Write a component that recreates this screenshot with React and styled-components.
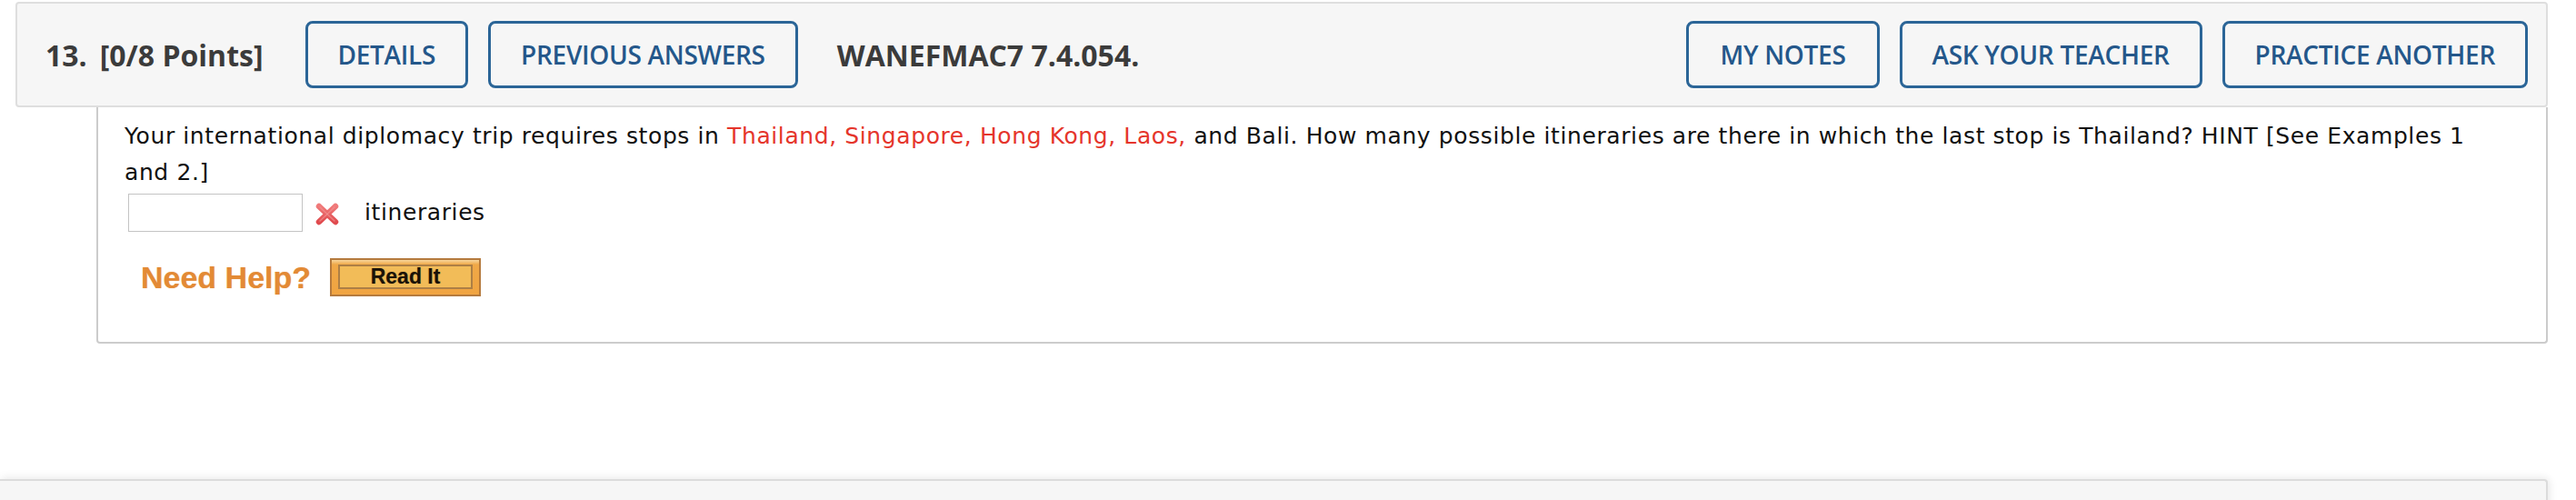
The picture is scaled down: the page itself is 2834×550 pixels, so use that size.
import React from "react";
import styled, { createGlobalStyle } from "styled-components";

const Global = createGlobalStyle`
  html, body { margin: 0; padding: 0; background: #ffffff; }
  body { width: 2834px; height: 550px; overflow: hidden; }
`;

const Page = styled.div`
  padding: 2px 31px 0 0;
  display: flex;
  flex-direction: column;
`;

const Question = styled.section`
  margin-left: 17px;
  display: flex;
  flex-direction: column;
`;

const Header = styled.header`
  height: 116px;
  box-sizing: border-box;
  background: #f6f6f6;
  border: 2px solid #dedede;
  border-radius: 4px;
  display: flex;
  align-items: center;
  padding: 0 20px 0 31px;
  font-family: "Open Sans", "Liberation Sans", sans-serif;
`;

const Number = styled.span`
  font-size: 32px;
  font-weight: 700;
  color: #3b3b3b;
`;

const Points = styled.span`
  font-size: 32px;
  font-weight: 700;
  color: #3b3b3b;
  margin-left: 14px;
  margin-right: 46px;
`;

const Title = styled.span`
  font-size: 32px;
  font-weight: 700;
  color: #3b3b3b;
  margin-left: 43px;
`;

const ButtonGroup = styled.div`
  display: flex;
  gap: 22px;
  margin-left: ${(p) => (p.$right ? "auto" : "0")};
`;

const OutlineButton = styled.button`
  height: 74px;
  box-sizing: border-box;
  padding: 0 ${(p) => p.$pad || 32}px;
  background: transparent;
  border: 3px solid #2b6597;
  border-radius: 8px;
  color: #24578a;
  font-family: "Open Sans", "Liberation Sans", sans-serif;
  font-size: 28px;
  font-weight: 600;
  letter-spacing: -0.3px;
  white-space: nowrap;
  cursor: pointer;
`;

const Body = styled.div`
  margin-left: 89px;
  height: 260px;
  box-sizing: border-box;
  border: 2px solid #cccccc;
  border-top: none;
  border-radius: 0 0 4px 4px;
  padding: 12px 40px 0 29px;
  font-family: "DejaVu Sans", Verdana, sans-serif;
  font-size: 25px;
  letter-spacing: 0.6px;
  line-height: 40px;
  color: #111111;
`;

const Prompt = styled.p`
  margin: 0;
`;

const Red = styled.span`
  color: #e5352b;
`;

const AnswerRow = styled.div`
  display: flex;
  align-items: center;
  margin-top: 3px;
  padding-left: 4px;
`;

const AnswerInput = styled.input`
  width: 192px;
  height: 42px;
  box-sizing: border-box;
  border: 1px solid #c4c4c4;
  background: #fff;
  margin: 0;
`;

const Mark = styled.svg`
  width: 28px;
  height: 26px;
  margin-left: 13px;
  margin-top: 4px;
  flex: none;
`;

const Unit = styled.span`
  margin-left: 27px;
`;

const HelpRow = styled.div`
  display: flex;
  align-items: center;
  margin-top: 29px;
  padding-left: 18px;
`;

const NeedHelp = styled.span`
  font-family: "Liberation Sans", Arial, sans-serif;
  font-weight: 700;
  font-size: 34px;
  line-height: 42px;
  letter-spacing: 0;
  color: #e38a35;
  text-shadow: 0 0 1px rgba(227, 138, 53, 0.6);
`;

const ReadIt = styled.button`
  margin-left: 21px;
  width: 166px;
  height: 42px;
  box-sizing: border-box;
  padding: 5px 7px 6px;
  border: 2px solid #b57a3d;
  background: linear-gradient(#f7d69c 0, #f0a847 5px, #f0a441 100%);
  cursor: pointer;
  display: flex;
`;

const ReadItInner = styled.span`
  flex: 1;
  display: flex;
  align-items: center;
  justify-content: center;
  border: 2px solid #ad7f45;
  background: #f2bc58;
  font-family: "Liberation Sans", Arial, sans-serif;
  font-weight: 700;
  font-size: 23px;
  letter-spacing: 0;
  color: #1a1208;
  text-shadow: 0 0 1px rgba(0, 0, 0, 0.4);
`;

const NextHeader = styled.div`
  margin-top: 149px;
  height: 40px;
  background: #f6f6f6;
  border-top: 2px solid #dcdcdc;
  border-right: 2px solid #dcdcdc;
  border-radius: 0 4px 0 0;
  box-shadow: 0 -4px 8px rgba(0, 0, 0, 0.04), 4px 0 8px rgba(0, 0, 0, 0.05);
`;

function WrongMark() {
  return (
    <Mark viewBox="0 0 28 26">
      <defs>
        <linearGradient id="xg" x1="0" y1="0" x2="0" y2="1">
          <stop offset="0" stopColor="#f07a7a" />
          <stop offset="1" stopColor="#e04a4e" />
        </linearGradient>
      </defs>
      <g strokeLinecap="round">
        <line x1="5" y1="4" x2="23" y2="21" stroke="url(#xg)" strokeWidth="6.5" />
        <line x1="23" y1="4" x2="5" y2="21" stroke="url(#xg)" strokeWidth="6.5" />
        <line x1="6" y1="5" x2="22" y2="20" stroke="#f39a9a" strokeWidth="1.5" opacity="0.6" />
        <line x1="22" y1="5" x2="6" y2="20" stroke="#f39a9a" strokeWidth="1.5" opacity="0.6" />
      </g>
    </Mark>
  );
}

export default function App() {
  return (
    <>
      <Global />
      <Page>
        <Question>
          <Header>
            <Number>13.</Number>
            <Points>[0/8 Points]</Points>
            <ButtonGroup>
              <OutlineButton $pad={33}>DETAILS</OutlineButton>
              <OutlineButton $pad={33}>PREVIOUS ANSWERS</OutlineButton>
            </ButtonGroup>
            <Title>WANEFMAC7 7.4.054.</Title>
            <ButtonGroup $right>
              <OutlineButton $pad={34}>MY NOTES</OutlineButton>
              <OutlineButton $pad={33}>ASK YOUR TEACHER</OutlineButton>
              <OutlineButton $pad={33}>PRACTICE ANOTHER</OutlineButton>
            </ButtonGroup>
          </Header>
          <Body>
            <Prompt>
              Your international diplomacy trip requires stops in{" "}
              <Red>Thailand, Singapore, Hong Kong, Laos,</Red> and Bali. How many
              possible itineraries are there in which the last stop is Thailand?
              HINT [See Examples 1 and 2.]
            </Prompt>
            <AnswerRow>
              <AnswerInput type="text" aria-label="itineraries" />
              <WrongMark />
              <Unit>itineraries</Unit>
            </AnswerRow>
            <HelpRow>
              <NeedHelp>Need Help?</NeedHelp>
              <ReadIt>
                <ReadItInner>Read It</ReadItInner>
              </ReadIt>
            </HelpRow>
          </Body>
        </Question>
        <NextHeader />
      </Page>
    </>
  );
}
